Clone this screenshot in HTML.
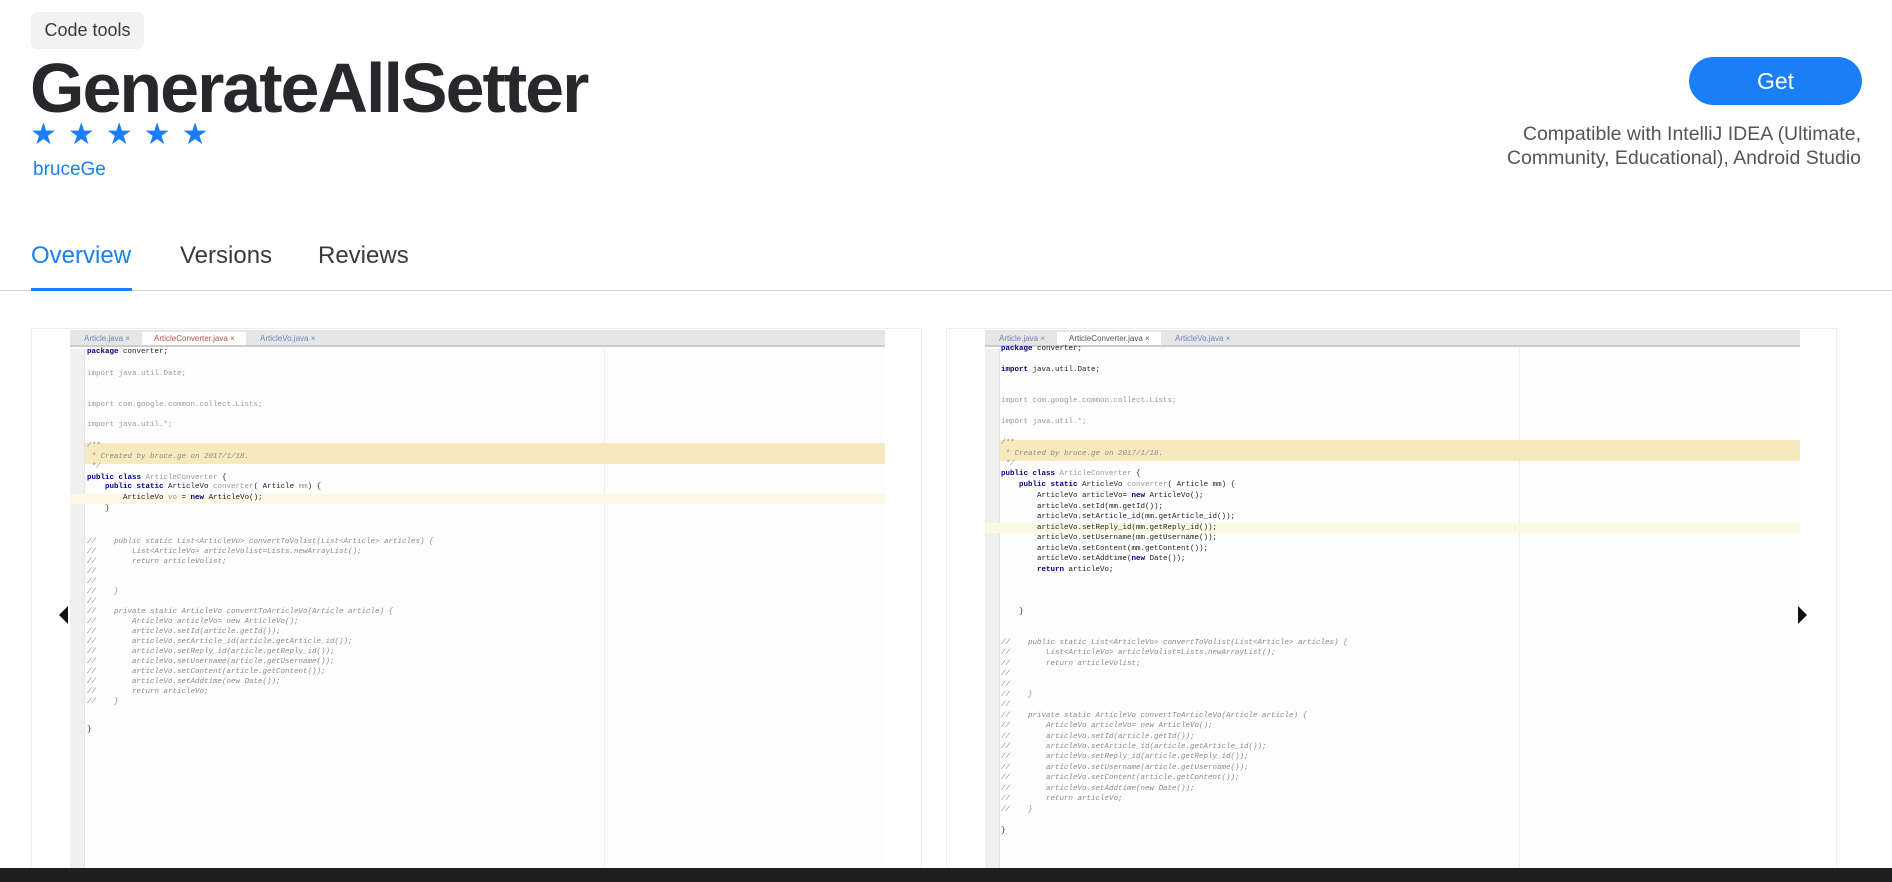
<!DOCTYPE html>
<html><head><meta charset="utf-8"><style>
*{margin:0;padding:0;box-sizing:border-box}
body{width:1892px;height:882px;overflow:hidden;background:#fff;font-family:"Liberation Sans",sans-serif;position:relative;color:#27282c}
.abs{position:absolute}
.chip{left:31px;top:12px;width:113px;height:37px;background:#f2f2f2;border-radius:6px;font-size:18px;color:#3a3a3a;line-height:37px;text-align:center}
h1{position:absolute;left:30px;top:48px;font-size:70px;font-weight:bold;letter-spacing:-2px;color:#27282c}
.stars{left:30px;top:117px;color:#1a7ef7;font-size:30px;letter-spacing:11px}
.author{left:33px;top:159px;color:#1a7ef7;font-size:19px}
.tab{top:242px;font-size:24px;color:#3a3a3a}
.get{left:1689px;top:57px;width:173px;height:48px;border-radius:24px;background:#1a7ef7;color:#fff;font-size:23px;text-align:center;line-height:48px}
.compat{right:31px;top:122px;width:420px;text-align:right;font-size:19.5px;line-height:24px;color:#555}
.sep{left:0;top:290px;width:1892px;height:1px;background:#d4d4d4}
.ul{left:31px;top:288px;width:101px;height:3px;background:#1a7ef7}
.panel{top:328px;height:554px;border:1px solid #eee;border-bottom:none;background:#fff}
.ed{position:absolute;top:1px;bottom:0;background:#fdfdfd;overflow:hidden}
.tb{position:absolute;left:0;right:0;top:0;height:17px;background:#e6e6e6;border-bottom:2px solid #ccc}
.tb span{position:absolute;top:2px;height:13px;font-size:8px;line-height:13px;color:#6e86b6;padding-left:12px}
.tb span.act{background:#fff;color:#c0504d}
.gut{position:absolute;left:0;top:19px;bottom:0;width:15px;background:#f0f0f0;border-right:1px solid #e4e4e4}
.guide{position:absolute;top:19px;bottom:0;width:1px;background:#eee}
.band{position:absolute;left:15px;right:0;background:#f5e9bd}
.hl{position:absolute;left:0;right:0;background:#fdf8e4}
.l{position:absolute;font-family:"Liberation Mono",monospace;font-size:7.5px;line-height:10px;white-space:pre;color:#222}
.k{color:#000080;font-weight:bold}
.g{color:#999}
.c{color:#8a8a8a;font-style:italic}
.arr{width:0;height:0;border-top:9px solid transparent;border-bottom:9px solid transparent}
.task{left:0;top:868px;width:1892px;height:14px;background:#1f1f1f}
</style></head><body>
<div class="abs chip">Code tools</div>
<h1>GenerateAllSetter</h1>
<div class="abs stars">★★★★★</div>
<div class="abs author">bruceGe</div>
<div class="abs tab" style="left:31px;color:#1a7ef7">Overview</div>
<div class="abs tab" style="left:180px">Versions</div>
<div class="abs tab" style="left:318px">Reviews</div>
<div class="abs get">Get</div>
<div class="abs compat">Compatible with IntelliJ IDEA (Ultimate,<br>Community, Educational), Android Studio</div>
<div class="abs sep"></div><div class="abs ul"></div>

<div class="abs panel" style="left:31px;width:891px">
 <div class="ed" style="left:38px;width:815px">
  <div class="tb"><span style="left:2px;width:68px">Article.java ×</span><span class="act" style="left:72px;width:104px">ArticleConverter.java ×</span><span style="left:178px;width:80px">ArticleVo.java ×</span></div>
  <div class="gut"></div>
  <div class="guide" style="left:534px"></div>
  <div class="band" style="top:113px;height:21px"></div>
  <div class="hl" style="top:164px;height:10px"></div>
 </div>
</div>
<div class="abs" style="left:87px;top:0">
<div class="l" style="top:347px"><span class="k">package</span> converter;</div>
<div class="l g" style="top:369px">import java.util.Date;</div>
<div class="l g" style="top:400px">import com.google.common.collect.Lists;</div>
<div class="l g" style="top:420px">import java.util.*;</div>
<div class="l c" style="top:441px">/**</div>
<div class="l c" style="top:452px"> * Created by bruce.ge on 2017/1/18.</div>
<div class="l c" style="top:462px"> */</div>
<div class="l" style="top:473px"><span class="k">public class</span> <span class="g">ArticleConverter</span> {</div>
<div class="l" style="top:482px">    <span class="k">public static</span> ArticleVo <span class="g">converter</span>( Article <span class="g">mm</span>) {</div>
<div class="l" style="top:493px">        ArticleVo <span class="g">vo</span> = <span class="k">new</span> ArticleVo();</div>
<div class="l" style="top:504px;color:#c00">    }</div>
<div class="l c" style="top:537px">//    public static List&lt;ArticleVo&gt; convertToVolist(List&lt;Article&gt; articles) {
//        List&lt;ArticleVo&gt; articleVolist=Lists.newArrayList();
//        return articleVolist;
//
//
//    }
//
//    private static ArticleVo convertToArticleVo(Article article) {
//        ArticleVo articleVo= new ArticleVo();
//        articleVo.setId(article.getId());
//        articleVo.setArticle_id(article.getArticle_id());
//        articleVo.setReply_id(article.getReply_id());
//        articleVo.setUsername(article.getUsername());
//        articleVo.setContent(article.getContent());
//        articleVo.setAddtime(new Date());
//        return articleVo;
//    }</div>
<div class="l" style="top:725px">}</div>
</div>
<div class="abs arr" style="left:59px;top:606px;border-right:9px solid #111"></div>

<div class="abs panel" style="left:946px;width:891px">
 <div class="ed" style="left:38px;width:815px">
  <div class="tb"><span style="left:2px;width:68px">Article.java ×</span><span class="act" style="left:72px;width:104px;color:#555">ArticleConverter.java ×</span><span style="left:178px;width:80px">ArticleVo.java ×</span></div>
  <div class="gut"></div>
  <div class="guide" style="left:534px"></div>
  <div class="band" style="top:110px;height:21px"></div>
  <div class="hl" style="top:193px;height:10px"></div>
 </div>
</div>
<div class="abs" style="left:1001px;top:0">
<div class="l" style="top:344px"><span class="k">package</span> converter;</div>
<div class="l" style="top:365px"><span class="k">import</span> java.util.Date;</div>
<div class="l g" style="top:396px">import com.google.common.collect.Lists;</div>
<div class="l g" style="top:417px">import java.util.*;</div>
<div class="l c" style="top:438px">/**</div>
<div class="l c" style="top:449px"> * Created by bruce.ge on 2017/1/18.</div>
<div class="l c" style="top:459px"> */</div>
<div class="l" style="top:469px"><span class="k">public class</span> <span class="g">ArticleConverter</span> {</div>
<div class="l" style="top:480px">    <span class="k">public static</span> ArticleVo <span class="g">converter</span>( Article mm) {</div>
<div class="l" style="top:491px;line-height:10.5px">        ArticleVo articleVo= <span class="k">new</span> ArticleVo();
        articleVo.setId(mm.getId());
        articleVo.setArticle_id(mm.getArticle_id());
        articleVo.setReply_id(mm.getReply_id());
        articleVo.setUsername(mm.getUsername());
        articleVo.setContent(mm.getContent());
        articleVo.setAddtime(<span class="k">new</span> Date());
        <span class="k">return</span> articleVo;</div>
<div class="l" style="top:607px">    }</div>
<div class="l c" style="top:638px;line-height:10.4px">//    public static List&lt;ArticleVo&gt; convertToVolist(List&lt;Article&gt; articles) {
//        List&lt;ArticleVo&gt; articleVolist=Lists.newArrayList();
//        return articleVolist;
//
//
//    }
//
//    private static ArticleVo convertToArticleVo(Article article) {
//        ArticleVo articleVo= new ArticleVo();
//        articleVo.setId(article.getId());
//        articleVo.setArticle_id(article.getArticle_id());
//        articleVo.setReply_id(article.getReply_id());
//        articleVo.setUsername(article.getUsername());
//        articleVo.setContent(article.getContent());
//        articleVo.setAddtime(new Date());
//        return articleVo;
//    }</div>
<div class="l" style="top:826px">}</div>
</div>
<div class="abs arr" style="left:1798px;top:606px;border-left:9px solid #111"></div>

<div class="abs task"></div>
</body></html>
